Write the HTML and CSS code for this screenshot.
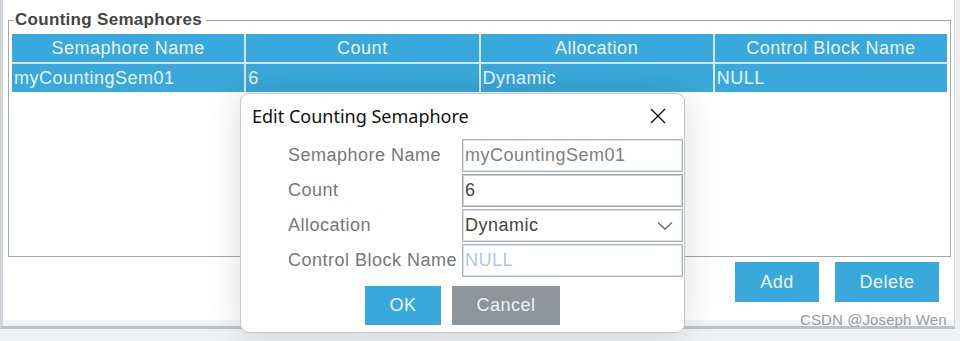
FILE: index.html
```html
<!DOCTYPE html>
<html lang="en">
  <head>
    <meta charset="UTF-8" />
    <meta name="viewport" content="width=device-width, initial-scale=1.0" />
    <title>Counting Semaphores</title>
    <link rel="stylesheet" href="styles.css">
  </head>
  <body>
    <div class="panel">
      <fieldset class="group">
        <legend>Counting Semaphores</legend>
        <div class="table-wrap">
          <div class="grid">
            <div class="cell head">Semaphore Name</div>
            <div class="cell head">Count</div>
            <div class="cell head">Allocation</div>
            <div class="cell head">Control Block Name</div>
            <div class="cell">myCountingSem01</div>
            <div class="cell">6</div>
            <div class="cell">Dynamic</div>
            <div class="cell">NULL</div>
          </div>
        </div>
      </fieldset>
      <div class="actions">
        <button class="btn btn-add">Add</button>
        <button class="btn btn-delete">Delete</button>
      </div>
    </div>

    <div class="dialog">
      <div class="dialog-head">
        <span class="dialog-title">Edit Counting Semaphore</span>
        <svg class="close" width="16" height="16" viewBox="0 0 16 16">
          <path d="M1 1 L15 15 M15 1 L1 15" stroke="#111" stroke-width="1.4" fill="none" />
        </svg>
      </div>
      <div class="form">
        <label class="form-label">Semaphore Name</label>
        <div class="field muted">myCountingSem01</div>
        <label class="form-label">Count</label>
        <div class="field focused">6</div>
        <label class="form-label">Allocation</label>
        <div class="field select">
          <span>Dynamic</span>
          <svg width="16" height="10" viewBox="0 0 16 10">
            <path d="M1 1.5 L8 8 L15 1.5" stroke="#666" stroke-width="1.3" fill="none" />
          </svg>
        </div>
        <label class="form-label">Control Block Name</label>
        <div class="field placeholder">NULL</div>
      </div>
      <div class="dialog-buttons">
        <button class="btn btn-ok">OK</button>
        <button class="btn btn-cancel">Cancel</button>
      </div>
    </div>

    <div class="watermark">CSDN @Joseph Wen</div>
  </body>
</html>
```

FILE: styles.css
```css
body {
  margin: 0;
  background-color: #eef0f2;
  font-family: "Liberation Sans", Arial, sans-serif;
  height: 341px;
  overflow: hidden;
}

.panel {
  width: 951px;
  height: 316px;
  padding: 10px 0 0 0;
  background-color: #fff;
  border-left: 3px solid #cfd6db;
  border-right: 1px solid #d5dadd;
  border-bottom: 3px solid #b9c3c9;
  box-shadow: inset 0 -6px 0 #f1f3f4;
}

.group {
  margin: 0 0 0 5px;
  width: 943px;
  box-sizing: border-box;
  border: 1px solid #a3a8ac;
  padding: 4px 3px 0 3px;
}

.group legend {
  font-size: 17px;
  line-height: 20px;
  font-weight: bold;
  color: #454545;
  letter-spacing: 0.3px;
  padding: 0 4px 0 1px;
  margin-left: 2px;
}

.table-wrap {
  height: 222px;
}

.grid {
  display: grid;
  grid-template-columns: repeat(4, 1fr);
  gap: 2px;
  width: 935px;
  background-color: #d3e8f4;
}

.cell {
  height: 28px;
  line-height: 29px;
  background-color: #39a8dc;
  color: #eaf5fb;
  font-size: 18px;
  letter-spacing: 0.5px;
  padding-left: 2px;
  white-space: nowrap;
}

.cell.head {
  text-align: center;
  padding-left: 0;
}

.actions {
  display: flex;
  justify-content: flex-end;
  gap: 16px;
  margin-top: 5px;
  padding-right: 15px;
}

.btn {
  border: none;
  font-family: "Liberation Sans", Arial, sans-serif;
  font-size: 18px;
  letter-spacing: 0.5px;
  color: #eef7fc;
  background-color: #39a8dc;
  height: 40px;
  padding: 0;
}

.btn-add {
  width: 84px;
}

.btn-delete {
  width: 104px;
}

.dialog {
  position: absolute;
  left: 240px;
  top: 93px;
  width: 445px;
  height: 240px;
  box-sizing: border-box;
  background-color: #fff;
  border: 1px solid #c4c7ca;
  border-radius: 9px;
  box-shadow: 0 0 34px rgba(0, 0, 0, 0.14);
}

.dialog-head {
  display: flex;
  justify-content: space-between;
  align-items: center;
  padding: 2px 18px 0 11px;
  height: 39px;
}

.dialog-title {
  font-family: "Noto Sans", sans-serif;
  font-size: 18px;
  color: #111;
}

.close {
  margin-top: 1px;
}

.form {
  display: grid;
  grid-template-columns: 174px 221px;
  grid-auto-rows: 33px;
  row-gap: 2px;
  margin: 4px 0 0 47px;
}

.form-label {
  font-size: 18px;
  letter-spacing: 0.5px;
  color: #777;
  line-height: 32px;
  white-space: nowrap;
}

.field {
  box-sizing: border-box;
  border: 1px solid #a9b3bb;
  box-shadow: inset 0 0 0 1px #dde2e6;
  font-size: 18px;
  letter-spacing: 0.5px;
  line-height: 31px;
  padding-left: 2px;
  color: #444;
}

.field.muted {
  color: #808080;
}

.field.focused {
  border-color: #9aa5ae;
  box-shadow: inset 0 0 0 1px #c9d0d6;
}

.field.placeholder {
  color: #a9c9ea;
}

.field.select {
  display: flex;
  justify-content: space-between;
  align-items: center;
  padding-right: 9px;
}

.dialog-buttons {
  display: flex;
  justify-content: center;
  gap: 11px;
  margin-top: 9px;
}

.btn-ok {
  width: 76px;
  height: 39px;
}

.btn-cancel {
  width: 108px;
  height: 39px;
  background-color: #8d969c;
  color: #eef0f1;
}

.watermark {
  position: absolute;
  left: 800px;
  top: 311px;
  font-size: 15px;
  color: #9a9a9a;
  letter-spacing: 0.1px;
  text-shadow: 0 0 2px #fff;
}
```
